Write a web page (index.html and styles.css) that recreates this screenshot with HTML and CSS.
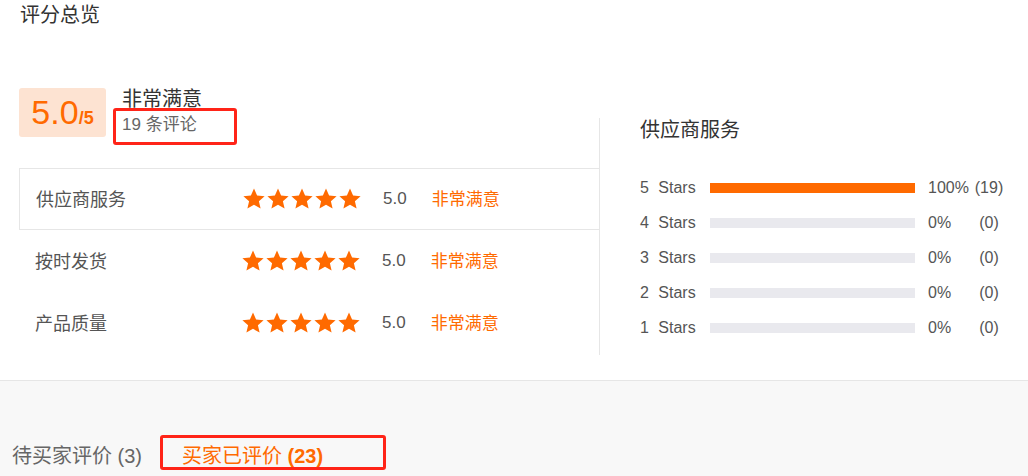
FILE: index.html
```
<!DOCTYPE html>
<html lang="zh-CN">
<head>
    <meta charset="UTF-8">
    <title>评分总览</title>
    <link rel="stylesheet" href="styles.css">
</head>
<body>
    <svg width="0" height="0" class="defs">
        <symbol id="star" viewBox="0 0 24 24">
            <path d="M12 1.6l3.1 6.9 7.5.7-5.7 5 1.7 7.4L12 17.8l-6.6 3.8 1.7-7.4-5.7-5 7.5-.7z"/>
        </symbol>
    </svg>

    <div class="page-title">评分总览</div>

    <div class="overview">
        <div class="left-col">
            <div class="summary">
                <div class="score-box"><span class="score">5.0</span><span class="score-max">/5</span></div>
                <div class="summary-text">
                    <div class="summary-level">非常满意</div>
                    <div class="summary-count">19 条评论<span class="mark mark-count"></span></div>
                </div>
            </div>

            <div class="dims">
                <div class="dim-row active">
                    <div class="dim-label">供应商服务</div>
                    <div class="stars">
                        <svg><use href="#star"/></svg><svg><use href="#star"/></svg><svg><use href="#star"/></svg><svg><use href="#star"/></svg><svg><use href="#star"/></svg>
                    </div>
                    <div class="dim-score">5.0</div>
                    <div class="dim-level">非常满意</div>
                </div>
                <div class="dim-row">
                    <div class="dim-label">按时发货</div>
                    <div class="stars">
                        <svg><use href="#star"/></svg><svg><use href="#star"/></svg><svg><use href="#star"/></svg><svg><use href="#star"/></svg><svg><use href="#star"/></svg>
                    </div>
                    <div class="dim-score">5.0</div>
                    <div class="dim-level">非常满意</div>
                </div>
                <div class="dim-row">
                    <div class="dim-label">产品质量</div>
                    <div class="stars">
                        <svg><use href="#star"/></svg><svg><use href="#star"/></svg><svg><use href="#star"/></svg><svg><use href="#star"/></svg><svg><use href="#star"/></svg>
                    </div>
                    <div class="dim-score">5.0</div>
                    <div class="dim-level">非常满意</div>
                </div>
            </div>
        </div>

        <div class="right-col">
            <div class="dist-title">供应商服务</div>
            <div class="dist">
                <div class="dist-row">
                    <span class="dist-label">5 Stars</span>
                    <span class="bar"><span class="bar-fill" style="width: 100%"></span></span>
                    <span class="dist-pct">100%</span>
                    <span class="dist-count">(19)</span>
                </div>
                <div class="dist-row">
                    <span class="dist-label">4 Stars</span>
                    <span class="bar"><span class="bar-fill" style="width: 0%"></span></span>
                    <span class="dist-pct">0%</span>
                    <span class="dist-count">(0)</span>
                </div>
                <div class="dist-row">
                    <span class="dist-label">3 Stars</span>
                    <span class="bar"><span class="bar-fill" style="width: 0%"></span></span>
                    <span class="dist-pct">0%</span>
                    <span class="dist-count">(0)</span>
                </div>
                <div class="dist-row">
                    <span class="dist-label">2 Stars</span>
                    <span class="bar"><span class="bar-fill" style="width: 0%"></span></span>
                    <span class="dist-pct">0%</span>
                    <span class="dist-count">(0)</span>
                </div>
                <div class="dist-row">
                    <span class="dist-label">1 Stars</span>
                    <span class="bar"><span class="bar-fill" style="width: 0%"></span></span>
                    <span class="dist-pct">0%</span>
                    <span class="dist-count">(0)</span>
                </div>
            </div>
        </div>
    </div>

    <div class="reviews">
        <div class="tabs">
            <div class="tab">待买家评价 (3)</div>
            <div class="tab tab-active">买家已评价 <b>(23)</b><span class="mark mark-tab"></span></div>
        </div>
    </div>
</body>
</html>
```

FILE: styles.css
```
body {
    margin: 0;
    font-family: "Liberation Sans", "Noto Sans CJK SC", sans-serif;
    background-color: #fff;
    color: #333;
    width: 1028px;
    height: 476px;
    overflow: hidden;
}

.defs {
    position: absolute;
}

.page-title {
    font-size: 20px;
    line-height: 24px;
    padding: 3px 0 0 20px;
    color: #333;
}

.overview {
    display: flex;
    align-items: flex-start;
    margin-top: 61px;
    padding-left: 19px;
}

.left-col {
    width: 580px;
}

.summary {
    display: flex;
    align-items: flex-start;
    height: 49px;
}

.score-box {
    width: 87px;
    height: 49px;
    background-color: #fde3d2;
    border-radius: 3px;
    color: #ff6a00;
    display: flex;
    align-items: baseline;
    justify-content: center;
    line-height: 49px;
}

.score {
    font-size: 34px;
}

.score-max {
    font-size: 18px;
    font-weight: bold;
}

.summary-text {
    margin-left: 16px;
}

.summary-level {
    font-size: 20px;
    line-height: 22px;
    color: #333;
}

.summary-count {
    position: relative;
    font-size: 17px;
    line-height: 20px;
    margin-top: 5px;
    color: #666;
}

.mark {
    position: absolute;
    border: 3px solid #ff2418;
    border-radius: 3px;
    box-sizing: border-box;
}

.mark-count {
    left: -9px;
    top: -7px;
    width: 124px;
    height: 37px;
}

.dims {
    margin-top: 31px;
}

.dim-row {
    display: flex;
    align-items: center;
    height: 62px;
    padding-left: 16px;
    box-sizing: border-box;
    font-size: 17px;
}

.dim-row.active {
    border: 1px solid #e6e6e6;
    border-right: none;
}

.dim-label {
    width: 206px;
    color: #555;
    font-size: 18px;
    padding-bottom: 3px;
}

.stars {
    display: flex;
    fill: #ff6a00;
}

.stars svg {
    width: 24px;
    height: 24px;
}

.dim-score {
    margin-left: 21px;
    color: #555;
}

.dim-level {
    margin-left: 25px;
    color: #ff6a00;
    padding-bottom: 3px;
}

.right-col {
    margin-top: 30px;
    height: 237px;
    border-left: 1px solid #e6e6e6;
    padding-left: 40px;
    box-sizing: border-box;
}

.dist-title {
    font-size: 20px;
    line-height: 24px;
    color: #333;
}

.dist {
    margin-top: 28px;
}

.dist-row {
    display: flex;
    align-items: center;
    height: 35px;
    font-size: 16px;
    color: #555;
}

.dist-label {
    width: 70px;
    word-spacing: 5px;
}

.bar {
    width: 205px;
    height: 10px;
    background-color: #e9e9ee;
}

.bar-fill {
    display: block;
    height: 100%;
    background-color: #ff6a00;
}

.dist-pct {
    width: 44px;
    margin-left: 13px;
}

.dist-count {
    width: 34px;
    text-align: center;
}

.reviews {
    margin-top: 25px;
    border-top: 1px solid #e6e6e6;
    background-color: #f8f8f8;
    height: 96px;
}

.tabs {
    display: flex;
    padding: 63px 0 0 12px;
    gap: 40px;
}

.tab {
    position: relative;
    font-size: 20px;
    line-height: 24px;
    color: #666;
}

.tab-active {
    color: #ff6a00;
}

.mark-tab {
    left: -22px;
    top: -9px;
    width: 226px;
    height: 35px;
}
```
